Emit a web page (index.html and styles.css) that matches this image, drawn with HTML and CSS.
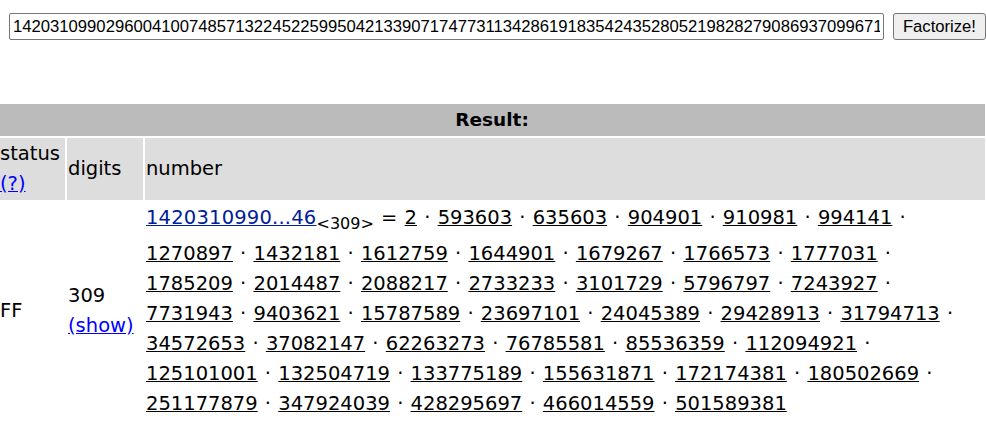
FILE: index.html
```html
<!DOCTYPE html>
<html lang="en">
<head>
    <meta charset="UTF-8">
    <meta name="viewport" content="width=device-width, initial-scale=1.0">
    <title>factordb.com</title>
    <link rel="stylesheet" href="styles.css">
</head>
<body>
    <form class="query" action="#" onsubmit="return false">
        <input type="text" name="query" value="1420310990296004100748571322452259950421339071747731134286191835424352805219828279086937099671">
        <button type="submit">Factorize!</button>
    </form>

    <table class="result">
        <tr>
            <td colspan="3" class="result-title">Result:</td>
        </tr>
        <tr class="head">
            <td class="col-status">status<br><a href="#">(?)</a></td>
            <td class="col-digits">digits</td>
            <td>number</td>
        </tr>
        <tr>
            <td>FF</td>
            <td>309<br><a href="#">(show)</a></td>
            <td class="factors"><a class="num" href="#">1420310990...46</a><sub>&lt;309&gt;</sub> = <a href="#">2</a> &middot; <a href="#">593603</a> &middot; <a href="#">635603</a> &middot; <a href="#">904901</a> &middot; <a href="#">910981</a> &middot; <a href="#">994141</a> &middot; <a href="#">1270897</a> &middot; <a href="#">1432181</a> &middot; <a href="#">1612759</a> &middot; <a href="#">1644901</a> &middot; <a href="#">1679267</a> &middot; <a href="#">1766573</a> &middot; <a href="#">1777031</a> &middot; <a href="#">1785209</a> &middot; <a href="#">2014487</a> &middot; <a href="#">2088217</a> &middot; <a href="#">2733233</a> &middot; <a href="#">3101729</a> &middot; <a href="#">5796797</a> &middot; <a href="#">7243927</a> &middot; <a href="#">7731943</a> &middot; <a href="#">9403621</a> &middot; <a href="#">15787589</a> &middot; <a href="#">23697101</a> &middot; <a href="#">24045389</a> &middot; <a href="#">29428913</a> &middot; <a href="#">31794713</a> &middot; <a href="#">34572653</a> &middot; <a href="#">37082147</a> &middot; <a href="#">62263273</a> &middot; <a href="#">76785581</a> &middot; <a href="#">85536359</a> &middot; <a href="#">112094921</a> &middot; <a href="#">125101001</a> &middot; <a href="#">132504719</a> &middot; <a href="#">133775189</a> &middot; <a href="#">155631871</a> &middot; <a href="#">172174381</a> &middot; <a href="#">180502669</a> &middot; <a href="#">251177879</a> &middot; <a href="#">347924039</a> &middot; <a href="#">428295697</a> &middot; <a href="#">466014559</a> &middot; <a href="#">501589381</a></td>
        </tr>
    </table>
</body>
</html>
```

FILE: styles.css
```css
* {
    box-sizing: border-box;
}

body {
    margin: 0;
    font-family: "DejaVu Sans", Verdana, sans-serif;
    color: #000;
    overflow: hidden;
}

.query {
    display: flex;
    gap: 9px;
    padding: 13px 0 0 9px;
    margin: 0;
}

.query input,
.query button {
    font-family: "Liberation Sans", Arial, sans-serif;
    font-size: 16.67px;
    height: 27px;
    color: #000;
    border: 1px solid #767676;
}

.query input {
    width: 879px;
    padding: 0 3px;
    background: #fff;
    border-radius: 2px;
}

.query button {
    padding: 0 9px;
    background: #efefef;
    border-radius: 3px;
    white-space: nowrap;
    flex-shrink: 0;
}

.result {
    width: calc(100% + 4px);
    margin: 62px 0 0 -3px;
    border-spacing: 2px;
    font-size: 19.5px;
    line-height: 30px;
}

.result td {
    padding: 1px;
    vertical-align: middle;
}

.result-title {
    background: #bbbbbb;
    text-align: center;
    font-weight: bold;
    font-size: 18.5px;
}

.head td {
    background: #dddddd;
}

.col-status {
    width: 66px;
}

.col-digits {
    width: 76px;
}

.result a {
    color: #0000ff;
}

.factors {
    padding-right: 20px !important;
    word-spacing: 1px;
}

.factors a {
    color: #000;
}

.factors a.num {
    color: #002099;
    letter-spacing: 0.2px;
}

.factors sub {
    font-size: 16px;
    vertical-align: sub;
    word-spacing: 0;
}
```
